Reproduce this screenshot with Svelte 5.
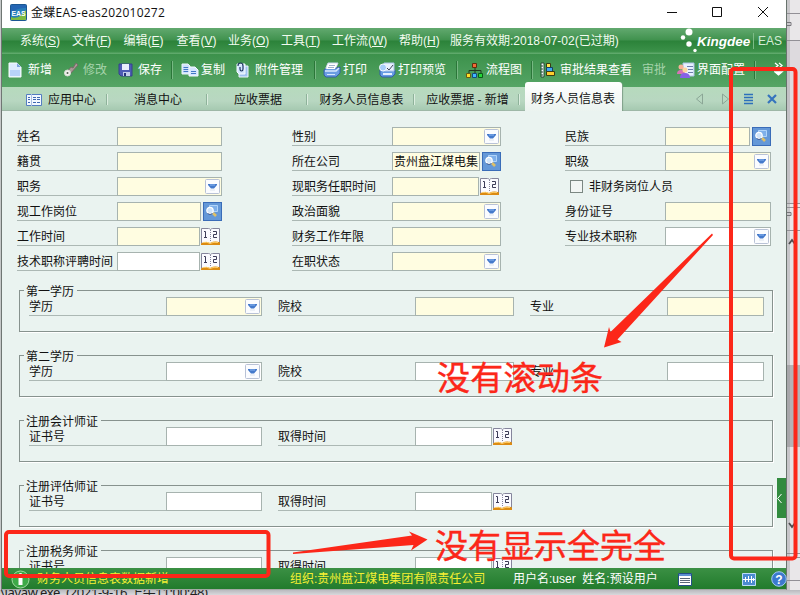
<script lang="ts">
    const menus = [
        ["系统", "S"],
        ["文件", "F"],
        ["编辑", "E"],
        ["查看", "V"],
        ["业务", "O"],
        ["工具", "T"],
        ["工作流", "W"],
        ["帮助", "H"],
    ];

    const tools = [
        { icon: "new", text: "新增" },
        { icon: "edit", text: "修改", off: true },
        { icon: "save", text: "保存" },
        { sep: true },
        { icon: "copy", text: "复制" },
        { icon: "attach", text: "附件管理" },
        { sep: true },
        { icon: "print", text: "打印" },
        { icon: "preview", text: "打印预览" },
        { sep: true },
        { icon: "flow", text: "流程图" },
        { sep: true },
        { icon: "audit", text: "审批结果查看" },
        { text: "审批", off: true },
        { icon: "layout", text: "界面配置" },
        { sep: true },
    ];

    const tabs = ["应用中心", "消息中心", "应收票据", "财务人员信息表", "应收票据 - 新增"];

    const fields = [
        { label: "姓名", kind: "text" },
        { label: "性别", kind: "combo" },
        { label: "民族", kind: "search" },
        { label: "籍贯", kind: "text" },
        { label: "所在公司", kind: "search", value: "贵州盘江煤电集" },
        { label: "职级", kind: "combo" },
        { label: "职务", kind: "combo" },
        { label: "现职务任职时间", kind: "date" },
        { label: "非财务岗位人员", kind: "check" },
        { label: "现工作岗位", kind: "search" },
        { label: "政治面貌", kind: "combo" },
        { label: "身份证号", kind: "text" },
        { label: "工作时间", kind: "date" },
        { label: "财务工作年限", kind: "text" },
        { label: "专业技术职称", kind: "combo", plain: true },
        { label: "技术职称评聘时间", kind: "date", plain: true },
        { label: "在职状态", kind: "combo" },
    ];

    const school = (plain: boolean) => [
        { label: "学历", kind: "combo", plain },
        { label: "院校", kind: "text", plain },
        { label: "专业", kind: "text", plain },
    ];
    const cert = [
        { label: "证书号", kind: "text", plain: true },
        { label: "取得时间", kind: "date", plain: true },
    ];
    const groups = [
        { title: "第一学历", items: school(false) },
        { title: "第二学历", items: school(true) },
        { title: "注册会计师证", items: cert },
        { title: "注册评估师证", items: cert },
        { title: "注册税务师证", items: cert },
    ];
</script>

{#snippet icon(name)}
    <svg class="icon" width="18" height="16" viewBox="0 0 18 16">
        {#if name == "new"}
            <path d="M1 1h8l4 4v10H1z" fill="#dcebff" stroke="#f8fcff" />
            <path d="M2 8h10v6H2z" fill="#b8d3fa" />
            <path d="M9 1v4h4z" fill="#7ba5de" />
        {:else if name == "edit"}
            <path d="M13 1l2 2-7 8-4-1 4-5 2 1z" fill="#a89a96" stroke="#776c69" />
            <circle cx="4.500" cy="11" r="3" fill="#f2f2ee" stroke="#d8ddd6" />
            <circle cx="4.500" cy="11" r="1" fill="#50604f" />
        {:else if name == "save"}
            <path d="M1 2h13v12H3l-2-2z" fill="#4d5cb4" stroke="#35408c" />
            <path d="M4 2h7v6H4z" fill="#e8eefc" />
            <path d="M5 10h7v4H5z" fill="#c0cbea" />
            <path d="M6 11h2v3H6z" fill="#26357e" />
        {:else if name == "copy"}
            <path d="M1 2h6l2 2v8H1z" fill="#cfe1fc" stroke="#eef6ff" />
            <path d="M2.500 5.500h5M2.500 7.500h5M2.500 9.500h5" stroke="#4378c6" />
            <path d="M8 5h6l3 3v6H8z" fill="#d5e6ff" stroke="#f3f9ff" />
            <path d="M10 9.500h5M10 11.500h5" stroke="#4378c6" />
        {:else if name == "attach"}
            <path d="M4 4h9v11H4z" fill="#9fc1f1" stroke="#eff7ff" />
            <path d="M2 2h8v10H4l-2-2z" fill="#d4e6ff" stroke="#f5faff" />
            <path d="M3 4q0-3 2.500-3T8 4v3q0 2-1.500 2T5 7V5" fill="none" stroke="#1f3560" stroke-width="1.200" />
        {:else if name == "print"}
            <path d="M5 1h10l-3 7H2z" fill="#fff" stroke="#c7d5ec" />
            <path d="M6 3h7M5 5h7" stroke="#8fa5c8" />
            <path d="M1 8l3-2h10l3-1v6l-4 4H3l-2-2z" fill="#6b9de3" stroke="#345ca8" />
            <path d="M5 2h9l-2 5H3z" fill="#fff" />
            <path d="M6 3.500h6M5 5.500h6" stroke="#9fb0cc" />
            <path d="M2 9h11l3-3" fill="none" stroke="#d8e8ff" stroke-width="1.500" />
            <path d="M4 12.500h8" stroke="#d8e8ff" />
        {:else if name == "preview"}
            <path d="M2 8h15v4l-3 3H4l-2-2z" fill="#659be3" stroke="#345ca8" />
            <path d="M6 1h10v8H5z" fill="#eaf2ff" stroke="#aec4e8" />
            <path d="M5 12h9" stroke="#e5f0ff" stroke-width="2" />
            <circle cx="5" cy="5.500" r="3.500" fill="#a8cdfa" stroke="#f4f8ff" />
            <path d="M9 6l2 2 4-5" fill="none" stroke="#40455c" />
        {:else if name == "flow"}
            <path d="M9 5v6M3 12V8.500h12V12" fill="none" stroke="#203820" />
            <path d="M6.500 1.500h4v4h-4z" fill="#f26a38" stroke="#60300c" />
            <path d="M.5 11.500h4v4h-4z" fill="#ffdf28" stroke="#6b5a10" />
            <path d="M6.500 11.500h4v4h-4z" fill="#42b8ff" stroke="#124c84" />
            <path d="M12.500 11.500h4v4h-4z" fill="#24d838" stroke="#0b5c18" />
        {:else if name == "audit"}
            <path d="M1 1h3v14H1z" fill="#f7fcff" stroke="#254c34" />
            <path d="M1 4h2M1 7h2M1 10h2M1 13h2" stroke="#254c34" />
            <path d="M6.500 1.500h4v4h-4z" fill="#ffe54a" stroke="#3b3c12" />
            <path d="M6.500 5.500h6v4h-6z" fill="#3fa7ed" stroke="#154064" />
            <path d="M6.500 9.500h8v4h-8z" fill="#ffcd2e" stroke="#3b3c12" />
        {:else if name == "layout"}
            <path d="M6 1h11v13H6z" fill="#e8f1ff" stroke="#adc1e5" />
            <path d="M10 4.500h6M11 7.500h5M11 10.500h5" stroke="#6c7dab" />
            <circle cx="4" cy="5" r="2.500" fill="#f7b096" />
            <path d="M0 12q0-4 4-4t4 4z" fill="#d772b5" />
            <circle cx="8" cy="8" r="2.500" fill="#ffd59d" />
            <path d="M3 16q0-5 5-5t5 5z" fill="#8662e6" />
        {/if}
    </svg>
{/snippet}

{#snippet field(f)}
    {#if f.kind == "check"}
        <label class="check"><span class="box"></span>{f.label}</label>
    {:else}
        <div class="field">
            <span class="label">{f.label}</span>
            <span class="input" class:plain={f.plain}>
                {f.value ?? ""}
                {#if f.kind == "combo"}
                    <svg class="drop" width="15" height="15" viewBox="0 0 15 15">
                        <rect x=".5" y=".5" width="14" height="14" rx="1" fill="#fbfcff" stroke="#b9c2d6" />
                        <path d="M3 5h9v1L9 9.500H6L3 6z" fill="#4479cb" />
                        <path d="M5 6h5" stroke="#8bb8f3" />
                        <path d="M5 11h5" stroke="#dce3ee" />
                    </svg>
                {/if}
            </span>
            {#if f.kind == "search"}
                <svg class="find" width="19" height="19" viewBox="0 0 19 19">
                    <rect x=".5" y=".5" width="18" height="18" fill="#6498d8" stroke="#3a6cb8" />
                    <path d="M6.500 3.500h8v6h-8z" fill="#7fb0ea" stroke="#b0d4fa" />
                    <path d="M10 11l3 3" stroke="#dfc067" stroke-width="2.600" />
                    <circle cx="7" cy="8.500" r="3.200" fill="#cfe4fb" stroke="#fff" stroke-width="1.200" />
                    <path d="M4.500 11.500q2.500 2 5 0" fill="none" stroke="#3d5c92" />
                </svg>
            {:else if f.kind == "date"}
                <svg class="date" width="19" height="18" viewBox="0 0 19 18">
                    <path d="M.5 1.500h7q1 0 2 1 1-1 2-1h7v15H.5z" fill="#fafaff" stroke="#85859c" />
                    <path d="M9.500 3v12" stroke="#85859c" stroke-dasharray="1 1" />
                    <path d="M0 16.500q4-2.500 9-.5 5-2.500 10-.5V18H0z" fill="#dc8b13" />
                    <path d="M2 15.500q4-1 7 1 4-2 8-1" fill="none" stroke="#ffd06d" />
                    <path d="M3 4.500h1.500V10M3 10.500h3M12 4.500h3.500v3H12.500v3H16" fill="none" stroke="#3c3c58" />
                </svg>
            {/if}
        </div>
    {/if}
{/snippet}

<div class="screen">
    <div class="behind-left"></div>
    <main>
        <header>
            <svg width="17" height="17" viewBox="0 0 17 17">
                <rect x=".5" y=".5" width="16" height="16" rx="1" fill="#277fba" stroke="#1b5793" />
                <path d="M1 13q8 3 15-7v10H1z" fill="#7dbb42" />
                <path d="M1 1h15v3Q7 3 1 10z" fill="#2465b4" />
                <text x="8.500" y="12" text-anchor="middle" textLength="14" lengthAdjust="spacingAndGlyphs">EAS</text>
            </svg>
            <span class="title">金蝶EAS-eas202010272</span>
            <svg class="winbtns" width="104" height="12" viewBox="0 0 104 12" fill="none" stroke="#111">
                <path d="M0 6.500h10M45.500 1.500h9v9h-9zM91 1l10 10M101 1L91 11" />
            </svg>
        </header>

        <nav>
            {#each menus as [name, key]}
                <span>{name}(<u>{key}</u>)</span>
            {/each}
            <span>服务有效期:2018-07-02(已过期)</span>
            <div class="brand">
                <svg width="17" height="26" viewBox="0 0 17 26" fill="#fff">
                    <circle cx="9" cy="4" r="3.500" />
                    <circle cx="3" cy="9.500" r="2.200" />
                    <circle cx="9" cy="16" r="2.700" />
                    <circle cx="15" cy="22.500" r="1.700" />
                </svg>
                <b>Kingdee</b>
                <span class="eas">EAS</span>
            </div>
        </nav>

        <div class="toolbar">
            {#each tools as t}
                {#if t.sep}
                    <i></i>
                {:else}
                    <span class="tool" class:off={t.off}>
                        {#if t.icon}{@render icon(t.icon)}{/if}{t.text}
                    </span>
                {/if}
            {/each}
            <svg width="10" height="15" viewBox="0 0 10 15" fill="none" stroke="#fff" stroke-width="1.300">
                <path d="M1 1l3 2.500L1 6M5 1l3 2.500L5 6" />
                <path d="M1 10h7l-3.500 3z" fill="#fff" />
            </svg>
        </div>

        <div class="tabs">
            {#each tabs as tab, i}
                <span class="tab">
                    {#if i == 0}
                        <svg width="16" height="12" viewBox="0 0 16 12">
                            <path d="M.5.5h15v11H.5z" fill="#f3f8ff" stroke="#547dc0" />
                            <path d="M5.500 0v12" stroke="#adc1e4" />
                            <path d="M2 3.500h2M2 5.500h2M2 8.500h2M7 3.500h3M7 5.500h3M7 8.500h3M11 3.500h3M11 5.500h3M11 8.500h3" stroke="#3e68b2" />
                        </svg>
                    {/if}
                    {tab}
                </span>
            {/each}
            <span class="active">财务人员信息表</span>
            <svg class="tabctl" width="84" height="12" viewBox="0 0 84 12" fill="none">
                <path d="M7.500 1v10L1.500 6zM27.500 1v10l6-5z" stroke="#8ba696" />
                <path d="M49 1.500h9M49 4.500h9M49 7.500h9M49 10.500h9" stroke="#2c70bb" stroke-width="1.600" />
                <path d="M73 2l8 8M81 2l-8 8" stroke="#3574bd" stroke-width="2.200" />
            </svg>
        </div>

        <section>
            <div class="form">
                {#each fields as f}
                    {@render field(f)}
                {/each}
            </div>
            {#each groups as g}
                <div class="group">
                    <div class="legend"><span>{g.title}</span></div>
                    <div class="items">
                        {#each g.items as f}
                            {@render field(f)}
                        {/each}
                    </div>
                </div>
            {/each}
            <svg class="handle" width="9" height="40" viewBox="0 0 9 40">
                <path d="M0 0h9v40H0z" fill="#328b3f" />
                <path d="M4.500 16L.7 20.500l3.800 4.500" fill="none" stroke="#fff" />
            </svg>
        </section>

        <footer>
            <svg width="19" height="19" viewBox="0 0 19 19">
                <circle cx="9.500" cy="9.500" r="8.500" fill="#3da947" stroke="#a2d9a2" />
                <circle cx="9.500" cy="5" r="1.900" fill="#fff" />
                <path d="M7.500 8h4v7h-4z" fill="#fff" />
            </svg>
            <span class="msg">财务人员信息表数据新增</span>
            <span class="msg">组织:贵州盘江煤电集团有限责任公司</span>
            <span>用户名:user&nbsp; 姓名:预设用户</span>
            <svg width="14" height="13" viewBox="0 0 14 13">
                <path d="M.5.500h13v12H.5z" fill="#fff" stroke="#244f86" />
                <path d="M1 1h12v2H1z" fill="#5d8fd2" />
                <path d="M2 5.500h10M2 7.500h10M2 9.500h10" stroke="#596779" />
            </svg>
            <svg width="14" height="13" viewBox="0 0 14 13">
                <path d="M.5.500h13v12H.5z" fill="#4b8bd0" stroke="#bcdcf8" />
                <path d="M1 6.500h12M3.500 4v5M6.500 3v6M9.500 3v7M11.500 5v3" stroke="#fff" />
            </svg>
            <svg width="16" height="16" viewBox="0 0 16 16">
                <circle cx="8" cy="8" r="7.300" fill="#3b79ce" stroke="#a4c9f3" />
                <text class="q" x="8" y="12.500" text-anchor="middle">?</text>
            </svg>
        </footer>
    </main>
    <svg class="behind-right" width="13" height="590" viewBox="0 0 13 590">
        <path d="M0 0h13v590H0z" fill="#e9e7e9" />
        <path d="M0 41h13v162H0z" fill="#dddade" />
        <path d="M0 232h13v320H0z" fill="#e4e2e5" />
        <path d="M0 365h13v82H0z" fill="#b4b3b6" />
        <path d="M0 0h3v590H0z" fill="#8e8e96" opacity=".35" />
        <path d="M0 13.500h13M0 40.500h13M0 203.500h13M0 207.500h13M0 230.500h13M0 553.500h13M0 557.500h13M0 580.500h13" stroke="#929096" />
        <path d="M-1 22.500h5v3h-5M-1 212.500h5v3h-5" fill="none" stroke="#77757b" />
        <path d="M2 244l3-4 3 4M2 523l3 4 3-4" fill="none" stroke="#4d4d50" stroke-width="1.800" />
    </svg>
    <div class="behind-bottom">\javaw.exe&nbsp; (2021-9-16 上午11:00:48)</div>

    <svg class="marks" width="800" height="595" viewBox="0 0 800 595">
        <rect x="731" y="69" width="64.500" height="489.500" rx="3" />
        <rect x="6" y="532" width="262.500" height="44" rx="3" />
        <path d="M712 233.500L610.500 332l-1.500-5-5 20.500 17.500-5.500-4-2.500L713 235z" />
        <path d="M293 552.500l119-17-3-4 18.500 8-16.500 11 2.500-5.500L293 554z" />
        <text x="437" y="390" textLength="166">没有滚动条</text>
        <text x="435" y="558" textLength="231">没有显示全完全</text>
    </svg>
</div>

<style>
    :global(body) {
        margin: 0;
        overflow: hidden;
    }
    .screen {
        position: relative;
        display: grid;
        grid-template-columns: 2px 785px 13px;
        grid-template-rows: 590px 5px;
        width: 800px;
        height: 595px;
        overflow: hidden;
        font: 12px/16px "Liberation Sans", "Noto Sans CJK SC", sans-serif;
        color: #111;
        white-space: nowrap;
    }
    svg {
        display: block;
        flex: none;
    }
    .behind-left {
        background: linear-gradient(90deg, #c5c8c8 50%, #6f7673 50%);
    }
    .behind-bottom {
        grid-column: 1 / 4;
        height: 5px;
        overflow: hidden;
        background: linear-gradient(#b9b9be, #d9d9dc);
        font: 13px/4px "Noto Sans", "Noto Sans CJK SC", sans-serif;
        letter-spacing: -.35px;
        color: #222;
    }
    main {
        display: flex;
        flex-direction: column;
        box-sizing: border-box;
        border-right: 1px solid #68736d;
        border-bottom: 1px solid #a3aaa5;
        min-width: 0;
    }
    header {
        display: flex;
        align-items: center;
        height: 28px;
        padding: 0 0 4px 8px;
        box-sizing: border-box;
        background: #fff;
    }
    header text {
        font: bold 8px "Liberation Sans", sans-serif;
        fill: #fff;
    }
    .title {
        margin: 2px 0 0 4px;
        font: 12px/20px "Open Sans", "Noto Sans CJK SC", sans-serif;
        letter-spacing: .25px;
    }
    .winbtns {
        margin-left: auto;
        margin-right: 15px;
    }
    nav {
        display: grid;
        grid-template-columns: 52px 51.500px 53px 51.500px 53px 51px 67px 51px 230px 1fr;
        align-items: center;
        height: 26px;
        padding-left: 18px;
        background: linear-gradient(#62a96f, #40924e 46%, #2b8239 50%, #3b9149 90%, #67af73);
        color: #f2fbf0;
    }
    .brand {
        display: flex;
        align-items: center;
        color: #fff;
    }
    .brand b {
        width: 56px;
        font: italic bold 13.500px "Liberation Sans", sans-serif;
    }
    .eas {
        padding-left: 4px;
        border-left: 1px solid #7dbb87;
        font-size: 12px;
        color: #d4ecd6;
    }
    .toolbar {
        display: grid;
        grid-template-columns: 55px 55px 53px 10px 54px 79px 9px 55px 78px 10px 65px 9px 102px 35px 77px 20px 10px;
        align-items: center;
        height: 33px;
        padding: 0 0 2px 6px;
        box-sizing: border-box;
        background: linear-gradient(#3c914b, #55a565);
        color: #fff;
    }
    .toolbar i {
        width: 1px;
        height: 18px;
        background: #2b7639;
        border-right: 1px solid #77b883;
    }
    .tool {
        display: flex;
        align-items: center;
    }
    .tool .icon {
        margin-right: 2px;
    }
    .off {
        color: #a6d3ab;
    }
    .tabs {
        display: grid;
        grid-template-columns: 106px 100px 100px 107px 105px 5px 97px 1fr;
        height: 24px;
        background: linear-gradient(#b6dabd, #b8d7c1 60%, #a6c9b1);
        border-bottom: 1px solid #9eb7a7;
        box-sizing: border-box;
    }
    .tab {
        display: flex;
        align-items: center;
        justify-content: center;
        position: relative;
        padding-top: 1px;
    }
    .tab:first-child {
        gap: 6px;
        padding-left: 12px;
    }
    .tab::after {
        content: "";
        position: absolute;
        right: 0;
        top: 7px;
        width: 1px;
        height: 11px;
        background: #8eb29a;
        border-right: 1px solid #dceee0;
    }
    .active {
        grid-column: 7;
        height: 29px;
        margin-top: -5px;
        padding: 2px 0 0 6px;
        box-sizing: border-box;
        line-height: 30px;
        border-radius: 3px 3px 0 0;
        background: linear-gradient(#fff, #ebf3ef);
        box-shadow: 1px 1px 1px #7f9f89;
        clip-path: inset(-2px -3px 0 -2px);
    }
    .tabctl {
        margin: 6px 7px 0 auto;
    }
    section {
        position: relative;
        height: 457px;
        overflow: hidden;
        background: #eaf3f0;
    }
    .form {
        display: grid;
        grid-template-columns: 205px 209px 206px;
        grid-auto-rows: 19px;
        column-gap: 70px;
        row-gap: 6px;
        padding: 16px 0 19px 15px;
    }
    .form > :global(:nth-child(3n)) {
        margin-left: -6px;
        margin-right: 6px;
    }
    .field {
        display: flex;
        height: 19px;
    }
    .label {
        flex: 0 0 100px;
        box-sizing: border-box;
        padding-top: 3px;
        line-height: 15px;
        border-bottom: 1px solid #acb8b4;
    }
    .input {
        display: flex;
        justify-content: space-between;
        flex: 1;
        min-width: 0;
        box-sizing: border-box;
        padding: 1px 1px 1px 1px;
        border: 1px solid #a7b3af;
        background: #fffde1;
        overflow: hidden;
    }
    .input.plain {
        background: #fff;
    }
    .drop {
        margin-left: auto;
    }
    .find {
        margin-left: 2px;
    }
    .date {
        margin: 0 2px 0 1px;
    }
    .check {
        display: flex;
        align-items: center;
        padding-left: 5px;
    }
    .form > .check {
        gap: 6px;
    }
    .box {
        width: 11px;
        height: 11px;
        border: 1px solid #7b8782;
        background: #f2f6f4;
    }
    .group {
        width: 754px;
        height: 42px;
        margin: 0 0 23px 17px;
        box-sizing: border-box;
        border: 1px solid #87928e;
        border-top: 0;
        box-shadow: 1px 1px #fff;
    }
    .legend {
        display: flex;
        height: 7px;
        line-height: 4px;
    }
    .legend::before {
        content: "";
        width: 4px;
        border-top: 1px solid #87928e;
    }
    .legend::after {
        content: "";
        flex: 1;
        border-top: 1px solid #87928e;
    }
    .legend span {
        padding: 0 3px 0 2px;
    }
    .items {
        display: grid;
        grid-template-columns: 233px 236px 234px;
        column-gap: 16px;
        padding-left: 9px;
    }
    .items .label {
        flex-basis: 137px;
    }
    .handle {
        position: absolute;
        right: 0;
        top: 367px;
    }
    footer {
        display: grid;
        grid-template-columns: 26px 253px 223px 165px 64px 29px 16px;
        align-items: center;
        height: 21px;
        padding: 1px 0 0 9px;
        box-sizing: border-box;
        background: linear-gradient(#3b9044, #217b2c);
        color: #fff;
    }
    .msg {
        color: #f4f032;
    }
    .q {
        font: bold 12px "Liberation Sans", sans-serif;
        fill: #fff;
    }
    .marks {
        position: absolute;
        inset: 0;
        fill: #fc2719;
    }
    .marks rect {
        fill: none;
        stroke: #fc2719;
        stroke-width: 4;
    }
    .marks text {
        font: 33px "Noto Sans CJK SC", sans-serif;
        stroke: #fc2719;
        stroke-width: .4;
    }
</style>
